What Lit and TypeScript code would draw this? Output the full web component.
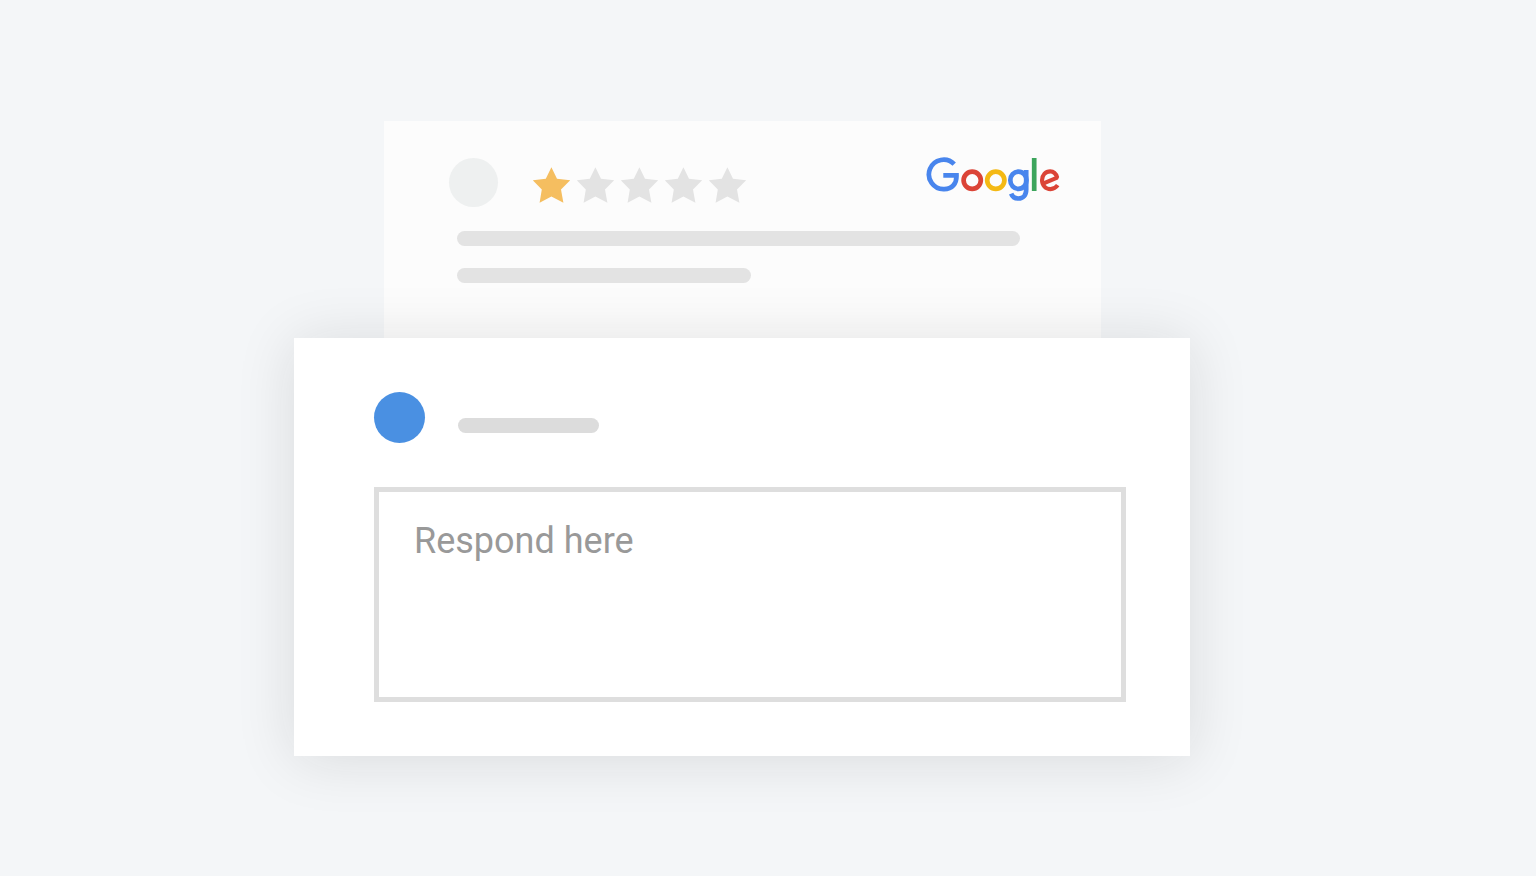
import { LitElement, html, css, svg } from "lit";
import { customElement, property } from "lit/decorators.js";
import { classMap } from "lit/directives/class-map.js";

@customElement("google-logo")
class GoogleLogo extends LitElement {
  static styles = css`
    :host {
      display: block;
    }
    .logo {
      display: block;
      width: 134px;
      height: 46px;
      fill: none;
      stroke-width: 4.7;
    }
    .blue {
      stroke: #4885ed;
    }
    .red {
      stroke: #db4437;
    }
    .yellow {
      stroke: #f4b914;
    }
    .green {
      stroke: #3ca55c;
    }
    .narrow {
      stroke-width: 4.1;
      stroke-linejoin: bevel;
    }
  `;

  render() {
    return html`
      <svg class="logo" viewBox="0 0 134 46" role="img" aria-label="Google">
        <path
          class="blue"
          d="M28.2 8.2A14.7 14.7 0 1 0 18.2 33.1C26 33.1 30.7 27.9 30.5 19.4H17.3"
        />
        <circle class="red" cx="46.2" cy="24.3" r="8.6" />
        <circle class="yellow" cx="69.8" cy="24.3" r="8.6" />
        <ellipse class="blue" cx="92.4" cy="24.3" rx="8.1" ry="8.6" />
        <path class="blue" d="M100.2 14V33.4C100.2 39.4 97 42.5 92.4 42.5C88.8 42.5 86.3 40.6 85.2 37.6" />
        <path class="green" d="M108.2 2V35" />
        <path
          class="red narrow"
          d="M116.4 27.8L131.2 21.6C130 17.6 127.4 15.4 124.2 15.4C119.5 15.4 116 19.3 116 24.3C116 29.3 119.7 33.1 124.5 33.1C127.6 33.1 130 31.7 131.7 29.2"
        />
      </svg>
    `;
  }
}

@customElement("star-rating")
class StarRating extends LitElement {
  @property({ type: Number }) value = 0;
  @property({ type: Number }) max = 5;

  static styles = css`
    :host {
      display: block;
    }
    .stars {
      display: flex;
      gap: 6px;
    }
    .star {
      display: block;
      width: 38px;
      height: 36px;
      fill: #e3e3e3;
    }
    .on {
      fill: #f5be60;
    }
  `;

  render() {
    return html`
      <div class="stars" role="img" aria-label="${this.value} / ${this.max}">
        ${Array.from(
          { length: this.max },
          (_, i) => html`
            <svg class=${classMap({ star: true, on: i < this.value })} viewBox="0 0 38 36">
              ${svg`<path d="M18.4 0.2L24 11.8L37.2 13.2L28 22.4L30.4 35.8L18.4 29.6L6.6 35.8L8.8 22.4L-0.2 13.2L12.8 11.8Z" />`}
            </svg>
          `
        )}
      </div>
    `;
  }
}

@customElement("app-root")
class AppRoot extends LitElement {
  static styles = css`
    :host {
      display: block;
      min-height: 100vh;
      box-sizing: border-box;
      padding: 121px 52px 120px 0;
      background: #f4f6f8;
      font-family: Roboto, "Liberation Sans", sans-serif;
    }
    .stage {
      display: flex;
      flex-direction: column;
      align-items: center;
    }
    .review,
    .reply {
      box-sizing: border-box;
    }
    .review {
      width: 80%;
      max-width: 717px;
      padding: 35px 41px 55px 65px;
      background: #fcfcfc;
    }
    .review-head {
      display: flex;
      align-items: flex-start;
    }
    .reviewer {
      width: 49px;
      height: 49px;
      margin-top: 2px;
      border-radius: 50%;
      background: #eef0f0;
    }
    .rating {
      margin: 11px auto 0 35px;
    }
    .lines {
      display: grid;
      gap: 22px;
      margin: 24px 40px 0 8px;
    }
    .line {
      height: 15px;
      border-radius: 8px;
      background: #e3e3e3;
    }
    .short {
      width: 294px;
    }
    .reply {
      position: relative;
      width: 100%;
      max-width: 896px;
      padding: 54px 64px 54px 80px;
      background: #fff;
      box-shadow: 0 3px 56px rgba(24, 24, 28, 0.12);
    }
    .reply-head {
      display: flex;
      align-items: flex-end;
      gap: 33px;
      margin-bottom: 44px;
    }
    .owner {
      width: 51px;
      height: 51px;
      border-radius: 50%;
      background: #4a90e2;
    }
    .name {
      width: 141px;
      height: 15px;
      margin-bottom: 10px;
      border-radius: 8px;
      background: #dcdcdc;
    }
    .response {
      display: block;
      box-sizing: border-box;
      width: 100%;
      height: 215px;
      padding: 28px 35px;
      border: 5px solid #dedede;
      border-radius: 0;
      outline: none;
      resize: none;
      background: #fff;
      color: #555;
      font: 400 36px/42px Roboto, "Liberation Sans", sans-serif;
    }
    .response::placeholder {
      color: #999;
      opacity: 1;
    }
  `;

  render() {
    return html`
      <main class="stage">
        <section class="review">
          <div class="review-head">
            <div class="reviewer"></div>
            <star-rating class="rating" value="1"></star-rating>
            <google-logo></google-logo>
          </div>
          <div class="lines">
            <div class="line"></div>
            <div class="line short"></div>
          </div>
        </section>
        <section class="reply">
          <div class="reply-head">
            <div class="owner"></div>
            <div class="name"></div>
          </div>
          <textarea class="response" aria-label="Respond here" placeholder="Respond here"></textarea>
        </section>
      </main>
    `;
  }
}
